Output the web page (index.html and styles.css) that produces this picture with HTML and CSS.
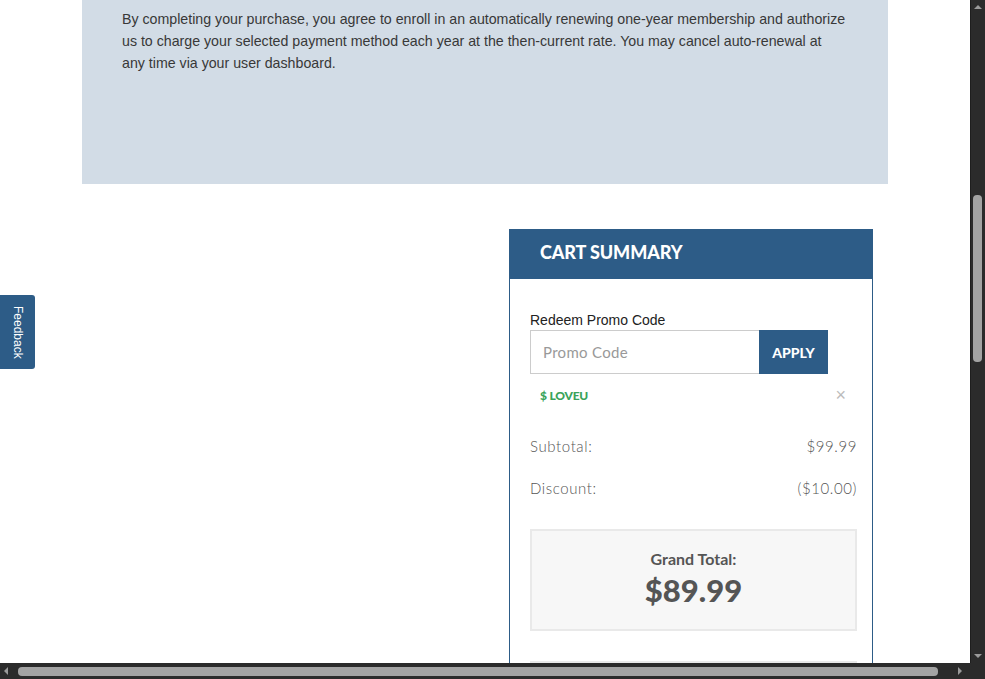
FILE: index.html
```html
<!DOCTYPE html>
<html lang="en">
<head>
  <meta charset="UTF-8">
  <title>Checkout</title>
  <link rel="stylesheet" href="styles.css">
</head>
<body>
  <div class="page">
    <section class="notice">
      <p>By completing your purchase, you agree to enroll in an automatically renewing one-year membership and authorize us to charge your selected payment method each year at the then-current rate. You may cancel auto-renewal at any time via your user dashboard.</p>
    </section>

    <aside class="cart">
      <div class="cart-head">Cart Summary</div>
      <div class="cart-body">
        <label class="promo-label" for="promo">Redeem Promo Code</label>
        <div class="promo-row">
          <input type="text" id="promo" placeholder="Promo Code">
          <button type="button">APPLY</button>
        </div>
        <div class="applied">
          <span class="code">$ LOVEU</span>
          <span class="remove">&times;</span>
        </div>
        <div class="line">
          <span>Subtotal:</span>
          <span>$99.99</span>
        </div>
        <div class="line">
          <span>Discount:</span>
          <span>($10.00)</span>
        </div>
        <div class="grand">
          <div class="grand-label">Grand Total:</div>
          <div class="grand-amount">$89.99</div>
        </div>
        <div class="next-box"></div>
      </div>
    </aside>
  </div>

  <a class="feedback" href="#">Feedback</a>

  <div class="vscroll">
    <span class="arrow up"></span>
    <span class="vthumb"></span>
    <span class="arrow down"></span>
  </div>
  <div class="hscroll">
    <span class="arrow left"></span>
    <span class="hthumb"></span>
    <span class="arrow right"></span>
    <span class="corner"></span>
  </div>
</body>
</html>
```

FILE: styles.css
```css
html, body {
  margin: 0;
  height: 679px;
  overflow: hidden;
  background: #fff;
}
body {
  font-family: "Liberation Sans", Arial, sans-serif;
  color: #333;
}
.page {
  padding-left: 82px;
}

/* membership notice */
.notice {
  width: 806px;
  height: 184px;
  box-sizing: border-box;
  padding: 8px 40px 0 40px;
  background: #d2dce6;
}
.notice p {
  margin: 0;
  font-size: 14.2px;
  line-height: 22px;
  color: #383838;
}

/* cart summary */
.cart {
  width: 364px;
  margin: 45px 0 0 427px;
  border: 1px solid #2d5c87;
  border-top: 0;
  box-sizing: border-box;
  height: 500px;
}
.cart-head {
  height: 50px;
  line-height: 47px;
  padding-left: 31px;
  background: #2d5c87;
  color: #fff;
  font-family: Lato, "Open Sans", sans-serif;
  font-weight: 900;
  font-size: 18px;
  text-transform: uppercase;
  letter-spacing: -0.1px;
  margin: 0 -1px;
}
.cart-body {
  padding: 33px 15px 0 20px;
}
.promo-label {
  display: block;
  font-size: 14px;
  line-height: 16px;
  color: #222;
  margin-bottom: 2px;
}
.promo-row {
  display: flex;
}
.promo-row input {
  width: 229px;
  height: 44px;
  box-sizing: border-box;
  border: 1px solid #ccc;
  border-right: 0;
  padding: 0 12px;
  font-family: Lato, sans-serif;
  font-size: 15px;
  color: #555;
  outline: none;
}
.promo-row input::placeholder {
  color: #999;
  letter-spacing: 0.3px;
}
.promo-row button {
  width: 69px;
  height: 44px;
  border: 0;
  background: #2d5c87;
  color: #fff;
  font-family: Lato, sans-serif;
  font-weight: 900;
  font-size: 14px;
  padding: 0;
}
.applied {
  display: flex;
  justify-content: space-between;
  align-items: center;
  height: 22px;
  margin-top: 10px;
  padding: 0 11px 0 10px;
}
.applied .code {
  color: #3aa35a;
  font-family: Lato, sans-serif;
  font-weight: 900;
  font-size: 12px;
  letter-spacing: -0.2px;
}
.applied .remove {
  color: #bbb;
  font-size: 18px;
  line-height: 22px;
}
.line {
  display: flex;
  justify-content: space-between;
  height: 20px;
  line-height: 20px;
  margin-top: 30px;
  font-family: Lato, sans-serif;
  font-weight: 300;
  font-size: 15px;
  letter-spacing: 0.6px;
  color: #555;
}
.line + .line {
  margin-top: 22px;
}
.grand {
  margin-top: 31px;
  height: 102px;
  box-sizing: border-box;
  border: 2px solid #e9e9e9;
  background: #f7f7f7;
  text-align: center;
  padding-top: 18px;
  color: #555;
  font-family: Lato, sans-serif;
}
.grand-label {
  font-weight: 700;
  font-size: 16px;
  line-height: 20px;
}
.grand-amount {
  font-weight: 900;
  font-size: 31px;
  line-height: 34px;
  margin-top: 4px;
}
.next-box {
  margin-top: 30px;
  height: 60px;
  border: 2px solid #e9e9e9;
  background: #f7f7f7;
}

/* feedback tab */
.feedback {
  position: fixed;
  left: 0;
  top: 295px;
  width: 35px;
  height: 74px;
  box-sizing: border-box;
  background: #2d5c87;
  border-radius: 0 3px 3px 0;
  color: #fff;
  font-size: 12px;
  text-decoration: none;
  writing-mode: vertical-rl;
  display: flex;
  align-items: center;
  justify-content: center;
}

/* window scrollbars */
.vscroll {
  position: fixed;
  top: 0;
  right: 0;
  width: 15px;
  height: 663px;
  background: #2b2b2b;
  border-left: 1px solid #1e1e1e;
  box-sizing: border-box;
}
.vthumb {
  position: absolute;
  left: 2px;
  top: 195px;
  width: 9px;
  height: 167px;
  border-radius: 4px;
  background: #a3a3a3;
}
.hscroll {
  position: fixed;
  left: 0;
  bottom: 0;
  width: 985px;
  height: 16px;
  background: #2b2b2b;
}
.hthumb {
  position: absolute;
  left: 18px;
  top: 4px;
  width: 920px;
  height: 9px;
  border-radius: 4px;
  background: #a3a3a3;
}
.corner {
  position: absolute;
  right: 0;
  top: 0;
  width: 15px;
  height: 16px;
  background: #2b2b2b;
}
.arrow {
  position: absolute;
  width: 0;
  height: 0;
  border: 4px solid transparent;
}
.arrow.up {
  left: 3px;
  top: 1px;
  border-bottom-color: #9a9a9a;
}
.arrow.down {
  left: 3px;
  bottom: 1px;
  border-top-color: #9a9a9a;
}
.arrow.left {
  left: 0;
  top: 4px;
  border-right-color: #9a9a9a;
}
.arrow.right {
  left: 958px;
  top: 4px;
  border-left-color: #9a9a9a;
}
```
